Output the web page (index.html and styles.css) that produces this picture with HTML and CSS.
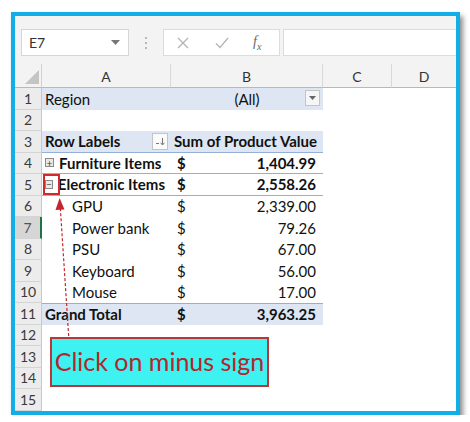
FILE: index.html
```html
<!DOCTYPE html>
<html>
<head>
<meta charset="utf-8">
<link rel="stylesheet" href="styles.css">
</head>
<body>
<div class="frame">
  <div class="toolbar">
    <div class="namebox">
      <span class="nb-text">E7</span>
      <svg class="nb-arrow" width="9" height="5" viewBox="0 0 9 5"><path d="M0 0H9L4.5 5Z" fill="#777"/></svg>
    </div>
    <div class="dots"><i></i><i></i><i></i></div>
    <div class="fxbox">
      <svg width="12" height="12" viewBox="0 0 12 12"><path d="M1 1L11 11M11 1L1 11" stroke="#b4b4b4" stroke-width="1.3"/></svg>
      <svg width="14" height="12" viewBox="0 0 14 12"><path d="M1 6.5L5 10.5L13 1" stroke="#b4b4b4" stroke-width="1.3" fill="none"/></svg>
      <span class="fx">f<sub>x</sub></span>
    </div>
    <div class="formula"></div>
  </div>
  <div class="sheet">
    <div class="corner"><svg width="14" height="14" viewBox="0 0 14 14"><path d="M14 0V14H0Z" fill="#c4c4c4"/></svg></div>
    <div class="ch">A</div><div class="ch">B</div><div class="ch">C</div><div class="ch last">D</div>

    <div class="rh">1</div>
    <div class="c pv-head">Region</div>
    <div class="c pv-head b1"><span>(All)</span><div class="dd"><svg width="7" height="4" viewBox="0 0 7 4"><path d="M0 0H7L3.5 4Z" fill="#666"/></svg></div></div>
    <div class="c"></div><div class="c"></div>

    <div class="rh">2</div>
    <div class="c"></div><div class="c"></div><div class="c"></div><div class="c"></div>

    <div class="rh">3</div>
    <div class="c pv-head line-b bold a3">Row Labels<div class="fbtn"><svg width="11" height="9" viewBox="0 0 11 9"><path d="M1 6.5h3" stroke="#777" stroke-width="1"/><path d="M7.5 1v6.5" stroke="#777" stroke-width="1.1"/><path d="M5.6 5.8L7.5 8L9.4 5.8" stroke="#777" fill="none" stroke-width="1"/></svg></div></div>
    <div class="c pv-head line-b bold">Sum of Product Value</div>
    <div class="c"></div><div class="c"></div>

    <div class="rh">4</div>
    <div class="c line-b bold"><span class="pm">+</span>Furniture Items</div>
    <div class="c line-b bold val"><span>$</span><span>1,404.99</span></div>
    <div class="c"></div><div class="c"></div>

    <div class="rh">5</div>
    <div class="c line-b bold"><span class="pm minus">−</span>Electronic Items</div>
    <div class="c line-b bold val"><span>$</span><span>2,558.26</span></div>
    <div class="c"></div><div class="c"></div>

    <div class="rh">6</div>
    <div class="c item">GPU</div>
    <div class="c val"><span>$</span><span>2,339.00</span></div>
    <div class="c"></div><div class="c"></div>

    <div class="rh sel">7</div>
    <div class="c item">Power bank</div>
    <div class="c val"><span>$</span><span>79.26</span></div>
    <div class="c"></div><div class="c"></div>

    <div class="rh">8</div>
    <div class="c item">PSU</div>
    <div class="c val"><span>$</span><span>67.00</span></div>
    <div class="c"></div><div class="c"></div>

    <div class="rh">9</div>
    <div class="c item">Keyboard</div>
    <div class="c val"><span>$</span><span>56.00</span></div>
    <div class="c"></div><div class="c"></div>

    <div class="rh">10</div>
    <div class="c item">Mouse</div>
    <div class="c val"><span>$</span><span>17.00</span></div>
    <div class="c"></div><div class="c"></div>

    <div class="rh">11</div>
    <div class="c pv-head line-t bold">Grand Total</div>
    <div class="c pv-head line-t bold val"><span>$</span><span>3,963.25</span></div>
    <div class="c"></div><div class="c"></div>

    <div class="rh">12</div>
    <div class="c"></div><div class="c"></div><div class="c"></div><div class="c"></div>
    <div class="rh">13</div>
    <div class="c"></div><div class="c"></div><div class="c"></div><div class="c"></div>
    <div class="rh">14</div>
    <div class="c"></div><div class="c"></div><div class="c"></div><div class="c"></div>
    <div class="rh">15</div>
    <div class="c"></div><div class="c"></div><div class="c"></div><div class="c"></div>
  </div>

  <div class="hilite"></div>
  <svg class="arrow" width="30" height="150" viewBox="0 0 30 150">
    <path d="M20 144L11.4 12" stroke="#c0282d" stroke-width="1.2" stroke-dasharray="3 2" fill="none"/>
    <path d="M10.6 1L6.5 13L15.5 12.4Z" fill="#c0282d"/>
  </svg>
  <div class="callout">Click on minus sign</div>
</div>
</body>
</html>
```
FILE: styles.css
```css
html, body {
  margin: 0;
  padding: 0;
  background: #ffffff;
}
body {
  font-family: Lato, "Liberation Sans", sans-serif;
}
.frame {
  position: relative;
  margin: 12px 0 0 11px;
  width: 441px;
  border: 4px solid #12aee8;
  box-shadow: 3px 4px 5px rgba(0, 0, 0, 0.45);
  background: #fff;
}
.toolbar {
  height: 48px;
  background: #f3f3f3;
  display: flex;
  align-items: flex-start;
  padding: 13px 0 0 6px;
  box-sizing: border-box;
}
.namebox {
  width: 108px;
  height: 27px;
  box-sizing: border-box;
  background: #fff;
  border: 1px solid #d6d6d6;
  display: flex;
  align-items: center;
  justify-content: space-between;
  padding: 0 8px 0 7px;
}
.nb-text {
  font-size: 14px;
  color: #333;
}
.dots {
  width: 34px;
  height: 27px;
  display: flex;
  flex-direction: column;
  align-items: center;
  justify-content: center;
  gap: 3px;
}
.dots i {
  display: block;
  width: 2px;
  height: 2px;
  background: #b8b8b8;
}
.fxbox {
  width: 117px;
  height: 27px;
  box-sizing: border-box;
  background: #fff;
  border: 1px solid #dcdcdc;
  display: flex;
  align-items: center;
  padding-left: 13px;
  gap: 26px;
}
.fx {
  font-family: "Liberation Serif", serif;
  font-style: italic;
  font-size: 14px;
  color: #666;
  margin-left: -2px;
}
.fx sub {
  font-size: 10px;
}
.formula {
  flex: 1;
  margin-left: 3px;
  height: 27px;
  background: #fff;
  border: 1px solid #dcdcdc;
  border-right: none;
  box-sizing: border-box;
}
.sheet {
  display: grid;
  grid-template-columns: 27px 129px 152px 69px 64px;
  grid-template-rows: 24px;
  grid-auto-rows: 21.5px;
  font-size: 15px;
  color: #111;
}
.corner {
  background: #f3f3f3;
  border-bottom: 1px solid #b8b8b8;
  border-right: 1px solid #d0d0d0;
  display: flex;
  align-items: flex-end;
  justify-content: flex-end;
  padding: 0 2px 3px 0;
  box-sizing: border-box;
}
.ch {
  background: #f3f3f3;
  border-bottom: 1px solid #b8b8b8;
  border-right: 1px solid #d8d8d8;
  box-sizing: border-box;
  display: flex;
  align-items: center;
  justify-content: center;
  font-size: 14px;
  color: #333;
  padding-top: 2px;
}
.ch.last {
  border-right: none;
}
.rh {
  background: #ececec;
  border-bottom: 1px solid #d4d4d4;
  border-right: 1px solid #c8c8c8;
  box-sizing: border-box;
  display: flex;
  align-items: center;
  justify-content: center;
  font-size: 14px;
  color: #3a3a3a;
}
.rh.sel {
  background: #d6d6d6;
  border-right: 2px solid #217346;
  color: #555;
}
.c {
  box-sizing: border-box;
  display: flex;
  align-items: center;
  padding: 0 6px 0 3px;
  white-space: nowrap;
  position: relative;
}
.bold {
  font-weight: 700;
}
.pv-head {
  background: #dde6f2;
}
.line-b {
  border-bottom: 1px solid #95b0d6;
}
.line-t {
  border-top: 1px solid #95b0d6;
}
.b1 {
  justify-content: center;
  padding: 0;
}
.dd {
  position: absolute;
  right: 3px;
  top: 2px;
  width: 15px;
  height: 16px;
  box-sizing: border-box;
  border: 1px solid #c4c4c4;
  background: #f6f6f6;
  display: flex;
  align-items: center;
  justify-content: center;
}
.a3 {
  justify-content: flex-start;
}
.fbtn {
  position: absolute;
  right: 3px;
  top: 2px;
  width: 16px;
  height: 17px;
  box-sizing: border-box;
  border: 1px solid #c4c4c4;
  background: #fbfbfb;
  display: flex;
  align-items: center;
  justify-content: center;
}
.val {
  justify-content: space-between;
  padding: 0 7px 0 6px;
}
.item {
  padding-left: 30px;
}
.pm {
  display: inline-flex;
  align-items: center;
  justify-content: center;
  width: 9px;
  height: 9px;
  box-sizing: border-box;
  border: 1px solid #8a8a8a;
  background: #e8e8e8;
  font-size: 10px;
  line-height: 1;
  font-weight: 400;
  color: #444;
  margin: 0 5px 0 0;
}
.hilite {
  position: absolute;
  left: 28px;
  top: 158px;
  width: 17px;
  height: 21px;
  box-sizing: border-box;
  border: 2px solid #d02a2a;
}
.arrow {
  position: absolute;
  left: 34px;
  top: 181px;
}
.callout {
  position: absolute;
  left: 35px;
  top: 321px;
  width: 219px;
  height: 50px;
  box-sizing: border-box;
  border: 2px solid #b8383a;
  background: #3ef2f2;
  color: #b3262b;
  font-size: 25px;
  white-space: nowrap;
  display: flex;
  align-items: center;
  justify-content: center;
  padding-bottom: 2px;
}
```
